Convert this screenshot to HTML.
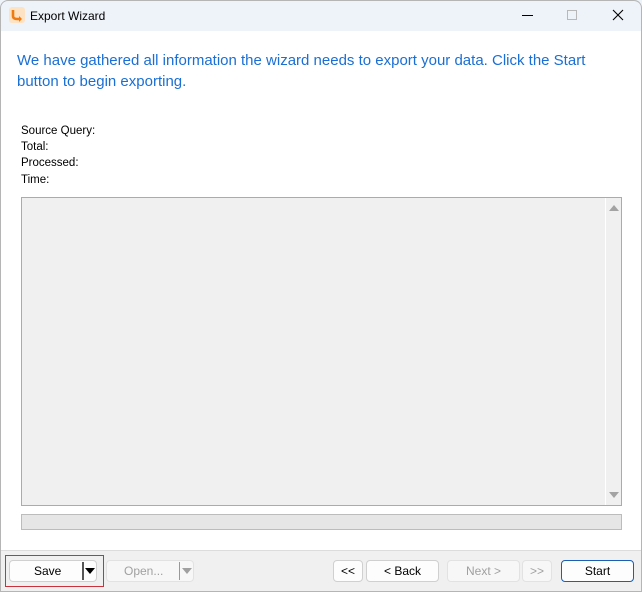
<!DOCTYPE html>
<html><head><style>
*{margin:0;padding:0;box-sizing:border-box}
body{width:642px;height:592px;overflow:hidden;font-family:"Liberation Sans",sans-serif;background:#fff;position:relative}
.win{position:absolute;left:0;top:0;width:642px;height:592px;overflow:hidden;background:#fff}
.frame{position:absolute;left:0;top:0;width:642px;height:592px;border:1px solid #b5b5b5;border-radius:8px 8px 0 0;pointer-events:none}
.title{position:absolute;left:0;top:0;width:100%;height:31px;background:#eef2f9}
.title .t{position:absolute;left:30px;top:9px;font-size:12px;color:#000}
.abs{position:absolute}
.head{position:absolute;left:17px;top:50px;width:610px;font-size:15px;line-height:21px;color:#1a6fd4}
.lbl{position:absolute;left:21px;font-size:11.5px;color:#000}
.box{position:absolute;left:21px;top:197px;width:601px;height:309px;background:#f0f0f0;border:1px solid #ababab}
.sb{position:absolute;right:0;top:0;width:16px;height:100%;border-left:1px solid #fff}
.prog{position:absolute;left:21px;top:514px;width:601px;height:16px;background:#e6e6e6;border:1px solid #bcbcbc}
.foot{position:absolute;left:0;top:550px;width:100%;height:42px;background:#f0f0f0;border-top:1px solid #dcdcdc}
.btn{position:absolute;top:560px;height:22px;background:#fdfdfd;border:1px solid #d0d0d0;border-radius:4px;font-size:12px;text-align:center;line-height:20px;color:#000}
.dis{color:#a0a0a0;background:#f7f7f7;border-color:#e2e2e2}
</style></head><body>
<div class="win">
<div class="title">
<svg class="abs" style="left:9px;top:7px" width="16" height="16" viewBox="0 0 16 16"><rect x="0" y="0" width="16" height="16" rx="3" fill="#fde3c3"/><path d="M4 3 L4 9 Q4 12 8 12 L12 12" stroke="#f07a12" stroke-width="2.6" fill="none"/><path d="M10 9 L13 12 L10 15" fill="#f07a12"/></svg>
<div class="t">Export Wizard</div>
<div class="abs" style="left:522px;top:15px;width:11px;height:1px;background:#000"></div>
<div class="abs" style="left:567px;top:10px;width:10px;height:10px;border:1px solid #b8b8b8"></div>
<svg class="abs" style="left:612px;top:9px" width="12" height="12" viewBox="0 0 12 12"><path d="M1 1L11 11M11 1L1 11" stroke="#000" stroke-width="1.1"/></svg>
</div>
<div class="head">We have gathered all information the wizard needs to export your data. Click the Start button to begin exporting.</div>
<div class="lbl" style="top:125px">Source Query:</div>
<div class="lbl" style="top:141px">Total:</div>
<div class="lbl" style="top:157px">Processed:</div>
<div class="lbl" style="top:174px">Time:</div>
<div class="box"><div class="sb">
<svg class="abs" style="left:3px;top:6px" width="10" height="7"><path d="M0 7L5 1L10 7Z" fill="#a3a3a3"/></svg>
<svg class="abs" style="left:3px;bottom:6px" width="10" height="7"><path d="M0 0L5 6L10 0Z" fill="#a3a3a3"/></svg>
</div></div>
<div class="prog"></div>
<div class="foot"></div>
<div class="abs" style="left:5px;top:555px;width:99px;height:32px;border:1px solid #c8323c"></div>
<div class="btn" style="left:9px;width:88px;text-align:left;padding-left:24px">Save</div>
<div class="abs" style="left:82px;top:562px;width:2px;height:18px;background:#555"></div>
<svg class="abs" style="left:85px;top:568px" width="10" height="6"><path d="M0 0L10 0L5 6Z" fill="#000"/></svg>
<div class="btn dis" style="left:106px;width:88px;text-align:left;padding-left:17px">Open...</div>
<div class="abs" style="left:179px;top:562px;width:1px;height:18px;background:#999"></div>
<svg class="abs" style="left:182px;top:568px" width="10" height="6"><path d="M0 0L10 0L5 6Z" fill="#a0a0a0"/></svg>
<div class="btn" style="left:333px;width:30px">&lt;&lt;</div>
<div class="btn" style="left:366px;width:73px">&lt; Back</div>
<div class="btn dis" style="left:447px;width:73px">Next &gt;</div>
<div class="btn dis" style="left:522px;width:30px">&gt;&gt;</div>
<div class="btn" style="left:561px;width:73px;border-color:#1a5fb4">Start</div>
<div class="frame"></div>
</div>
</body></html>
